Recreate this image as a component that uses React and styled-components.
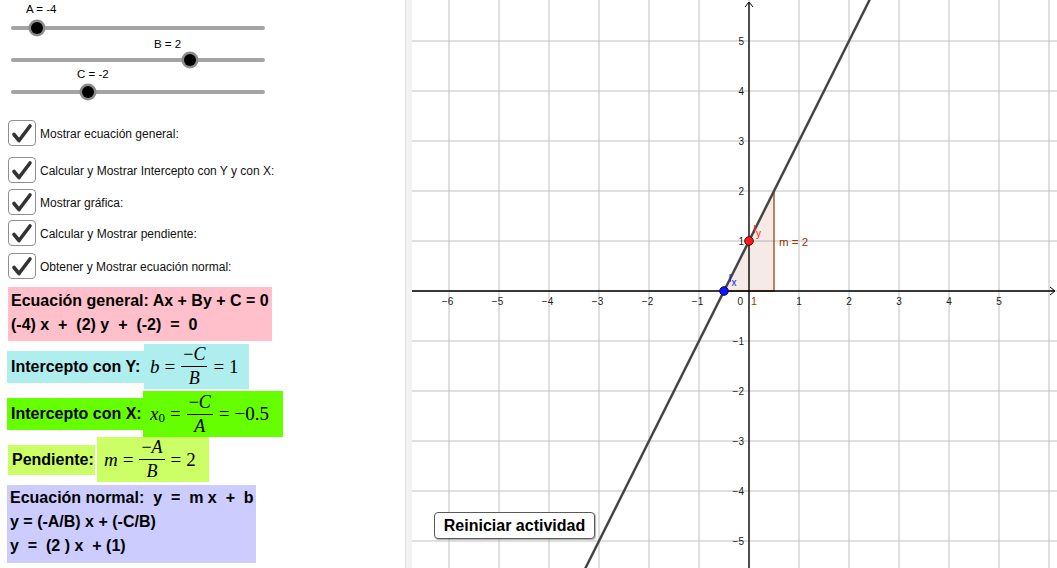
import React from "react";
import styled, { createGlobalStyle } from "styled-components";

const Global = createGlobalStyle`
  html, body { margin: 0; padding: 0; overflow: hidden; background: #fff; }
  body { font-family: "Liberation Sans", Arial, sans-serif; color: #000; }
`;

const Page = styled.div`
  display: flex;
  width: 1057px;
  height: 568px;
  overflow: hidden;
`;

const Side = styled.div`
  width: 405px;
  flex: none;
  display: flex;
  flex-direction: column;
  padding-top: 4px;
  box-sizing: border-box;
  background: #fff;
`;

const Divider = styled.div`
  width: 6px;
  flex: none;
  background: #f3f3f3;
  border-left: 1px solid #dedede;
`;

const GraphArea = styled.div`
  position: relative;
  flex: 1;
  height: 568px;
  background: #fff;
`;

/* ---------- sliders ---------- */
const SliderLabel = styled.div`
  font-size: 11.5px;
  line-height: 10px;
  height: 10px;
  margin-left: ${(p) => p.$x}px;
  margin-top: ${(p) => p.$top}px;
`;

const TrackWrap = styled.div`
  position: relative;
  margin-left: 11px;
  width: 254px;
  height: 18px;
  margin-top: ${(p) => p.$gap}px;
`;

const TrackLine = styled.div`
  margin-top: 7px;
  height: 4px;
  border-radius: 2px;
  background: #a4a4a4;
`;

const Knob = styled.div`
  position: absolute;
  top: 3px;
  width: 12px;
  height: 12px;
  margin-left: -5px;
  border-radius: 50%;
  background: #000;
  box-shadow: 0 0 0 2.5px #8c8c8c;
`;

function Slider({ label, value, labelX, labelTop, gap }) {
  const pct = ((value + 5) / 10) * 100;
  return (
    <>
      <SliderLabel $x={labelX} $top={labelTop}>{label}</SliderLabel>
      <TrackWrap $gap={gap}>
        <TrackLine />
        <Knob style={{ left: `${pct}%` }} />
      </TrackWrap>
    </>
  );
}

/* ---------- checkboxes ---------- */
const CheckRow = styled.div`
  display: flex;
  align-items: center;
  height: 26px;
  margin-top: ${(p) => p.$top}px;
  margin-left: 8px;
`;

const Box = styled.div`
  width: 26px;
  height: 24px;
  border: 1px solid #8f8f8f;
  border-radius: 4px;
  background: #fff;
  display: flex;
  align-items: center;
  justify-content: center;
  flex: none;
`;

const CheckText = styled.span`
  margin-left: 4px;
  font-size: 12px;
  color: #111;
  padding-top: 2px;
`;

function Check({ top, children }) {
  return (
    <CheckRow $top={top}>
      <Box>
        <svg width="26" height="24" viewBox="0 0 26 24">
          <path d="M5 13.5 L10 19.5 L21 5" fill="none" stroke="#333" strokeWidth="3.6" strokeLinecap="round" strokeLinejoin="round" />
        </svg>
      </Box>
      <CheckText>{children}</CheckText>
    </CheckRow>
  );
}

/* ---------- formula panels ---------- */
const TextPanel = styled.div`
  background: ${(p) => p.$bg};
  width: ${(p) => p.$w}px;
  margin-left: ${(p) => p.$left}px;
  margin-top: ${(p) => p.$top}px;
  padding: ${(p) => p.$pad};
  box-sizing: border-box;
  font-weight: bold;
  font-size: 16px;
  line-height: 24px;
  white-space: pre;
`;

const FormulaRow = styled.div`
  display: flex;
  align-items: center;
  margin-top: ${(p) => p.$top}px;
  margin-left: ${(p) => p.$left}px;
`;

const LabelBox = styled.div`
  background: ${(p) => p.$bg};
  width: ${(p) => p.$w}px;
  height: ${(p) => p.$h}px;
  margin-right: ${(p) => p.$mr || 0}px;
  padding-left: 4px;
  box-sizing: border-box;
  display: flex;
  align-items: center;
  font-weight: bold;
  font-size: 16px;
  white-space: pre;
`;

const MathBox = styled.div`
  background: ${(p) => p.$bg};
  width: ${(p) => p.$w}px;
  height: ${(p) => p.$h}px;
  padding-left: ${(p) => p.$pl}px;
  box-sizing: border-box;
  display: flex;
  align-items: center;
  font-family: "Liberation Serif", "DejaVu Serif", serif;
  font-size: 19px;
  white-space: nowrap;
`;

const V = styled.i`
  font-style: italic;
`;

const Sub = styled.span`
  font-size: 13px;
  position: relative;
  top: 4px;
`;

const Eq = styled.span`
  margin: 0 5px;
`;

const Frac = styled.span`
  display: inline-flex;
  flex-direction: column;
  align-items: stretch;
  font-size: 18px;
  line-height: 17px;
  margin: 0 1px;
`;

const Num = styled.span`
  text-align: center;
  padding: 0 2px 3px;
`;

const Den = styled.span`
  text-align: center;
  padding: 3px 2px 0;
  border-top: 1px solid #000;
`;

/* ---------- graph ---------- */
const ResetButton = styled.button`
  position: absolute;
  left: 22px;
  top: 512px;
  width: 161px;
  height: 27px;
  padding: 0;
  border: 1px solid #5a5a5a;
  border-radius: 4px;
  background: #fff;
  box-shadow: 1px 1px 1px rgba(0, 0, 0, 0.3);
  font-family: "Liberation Sans", Arial, sans-serif;
  font-weight: bold;
  font-size: 16px;
  color: #000;
`;

const W = 645;
const H = 568;
const OX = 337;
const OY = 291;
const U = 50;
const m = (n) => (n < 0 ? `\u2212${-n}` : `${n}`);

function Graph() {
  const kx = [-6, -5, -4, -3, -2, -1, 0, 1, 2, 3, 4, 5, 6];
  const ky = [-5, -4, -3, -2, -1, 0, 1, 2, 3, 4, 5];
  const lx = (x) => OX + U * x;
  const ly = (y) => OY - U * y;
  const brown = "rgb(153,51,0)";
  return (
    <svg width={W} height={H} style={{ display: "block" }}>
      {kx.map((k) => (
        <line key={"v" + k} x1={lx(k)} x2={lx(k)} y1={0} y2={H} stroke="#c0c0c0" strokeWidth="1" />
      ))}
      {ky.map((k) => (
        <line key={"h" + k} x1={0} x2={W} y1={ly(k)} y2={ly(k)} stroke="#c0c0c0" strokeWidth="1" />
      ))}
      {/* slope triangle */}
      <polygon points={`${lx(-0.5)},${ly(0)} ${lx(0.5)},${ly(0)} ${lx(0.5)},${ly(2)}`} fill="rgba(153,51,0,0.1)" stroke="none" />
      <polyline points={`${lx(-0.5)},${ly(0)} ${lx(0.5)},${ly(0)} ${lx(0.5)},${ly(2)}`} fill="none" stroke="rgba(153,51,0,0.6)" strokeWidth="2" />
      {/* axes */}
      <line x1={0} x2={W - 2} y1={OY} y2={OY} stroke="#000" strokeWidth="1.3" />
      <polyline points={`${W - 7},${OY - 4} ${W - 2},${OY} ${W - 7},${OY + 4}`} fill="none" stroke="#000" strokeWidth="1" />
      <line x1={OX} x2={OX} y1={2} y2={H} stroke="#000" strokeWidth="1.3" />
      <polyline points={`${OX - 4},${7} ${OX},${2} ${OX + 4},${7}`} fill="none" stroke="#000" strokeWidth="1" />
      {/* axis labels */}
      <g fontFamily="Liberation Sans, Arial, sans-serif" fontSize="10" fill="#1a1a1a">
        {kx.filter((k) => k !== 0 && k !== 6).map((k) => (
          <text key={"tx" + k} x={lx(k) + (k < 0 ? -1.5 : 0)} y={305} textAnchor="middle">{m(k)}</text>
        ))}
        {ky.filter((k) => k !== 0).map((k) => (
          <text key={"ty" + k} x={OX - 5} y={ly(k) + 3.5} textAnchor="end">{m(k)}</text>
        ))}
        <text x={OX - 6} y={305} textAnchor="end">0</text>
      </g>
      {/* line y = 2x + 1 */}
      <line x1={lx(-3.4)} y1={ly(-5.8)} x2={lx(2.5)} y2={ly(6)} stroke="#444" strokeWidth="2.5" />
      {/* slope labels */}
      <g fontFamily="Liberation Sans, Arial, sans-serif" fill={brown}>
        <text x={lx(0.5) + 5} y={246} fontSize="11.5">m = 2</text>
        <text x={OX + 2} y={305} fontSize="10.5">1</text>
      </g>
      {/* points */}
      <circle cx={lx(-0.5)} cy={ly(0)} r="4.3" fill="#1414ff" stroke="#000066" strokeWidth="1" />
      <circle cx={lx(0)} cy={ly(1)} r="4.3" fill="#ff1a1a" stroke="#660000" strokeWidth="1" />
      <g fontFamily="Liberation Sans, Arial, sans-serif">
        <text x={lx(-0.5) + 4.5} y={282} fontSize="11" fill="#1414ff">I<tspan fontSize="10" dy="4">x</tspan></text>
        <text x={lx(0) + 4} y={233} fontSize="11" fill="#ff1a1a">I<tspan fontSize="10" dy="4">y</tspan></text>
      </g>
    </svg>
  );
}

export default function App() {
  return (
    <>
      <Global />
      <Page>
        <Side>
          <Slider label="A = -4" value={-4} labelX={26} labelTop={0} gap={5} />
          <Slider label="B = 2" value={2} labelX={154} labelTop={2} gap={2} />
          <Slider label="C = -2" value={-2} labelX={77} labelTop={0} gap={4} />

          <Check top={19}>Mostrar ecuación general:</Check>
          <Check top={11}>Calcular y Mostrar Intercepto con Y y con X:</Check>
          <Check top={6}>Mostrar gráfica:</Check>
          <Check top={5}>Calcular y Mostrar pendiente:</Check>
          <Check top={7}>Obtener y Mostrar ecuación normal:</Check>

          <TextPanel $bg="#ffc0cb" $w={264} $left={8} $top={8} $pad="2px 0 4px 3px">
            {"Ecuación general: Ax + By + C = 0\n(-4) x  +  (2) y  +  (-2)  =  0"}
          </TextPanel>

          <FormulaRow $top={3} $left={7}>
            <LabelBox $bg="#afeeee" $w={137} $h={32}>Intercepto con Y:</LabelBox>
            <MathBox $bg="#afeeee" $w={105} $h={45} $pl={6}>
              <V>b</V>
              <Eq>=</Eq>
              <Frac>
                <Num>−<V>C</V></Num>
                <Den><V>B</V></Den>
              </Frac>
              <Eq>=</Eq>1
            </MathBox>
          </FormulaRow>

          <FormulaRow $top={2} $left={7}>
            <LabelBox $bg="#66ff00" $w={136} $h={32}>Intercepto con X:</LabelBox>
            <MathBox $bg="#66ff00" $w={140} $h={46} $pl={7}>
              <V>x</V><Sub>0</Sub>
              <Eq>=</Eq>
              <Frac>
                <Num>−<V>C</V></Num>
                <Den><V>A</V></Den>
              </Frac>
              <Eq>=</Eq>−0.5
            </MathBox>
          </FormulaRow>

          <FormulaRow $top={0} $left={8}>
            <LabelBox $bg="#ccff66" $w={87} $h={30} $mr={2}>Pendiente:</LabelBox>
            <MathBox $bg="#ccff66" $w={112} $h={45} $pl={7}>
              <V>m</V>
              <Eq>=</Eq>
              <Frac>
                <Num>−<V>A</V></Num>
                <Den><V>B</V></Den>
              </Frac>
              <Eq>=</Eq>2
            </MathBox>
          </FormulaRow>

          <TextPanel $bg="#ccccff" $w={249} $left={7} $top={3} $pad="1px 0 5px 3px">
            {"Ecuación normal:  y  =  m x  +  b\ny = (-A/B) x + (-C/B)\ny  =  (2 ) x  + (1)"}
          </TextPanel>
        </Side>
        <Divider />
        <GraphArea>
          <Graph />
          <ResetButton>Reiniciar actividad</ResetButton>
        </GraphArea>
      </Page>
    </>
  );
}
